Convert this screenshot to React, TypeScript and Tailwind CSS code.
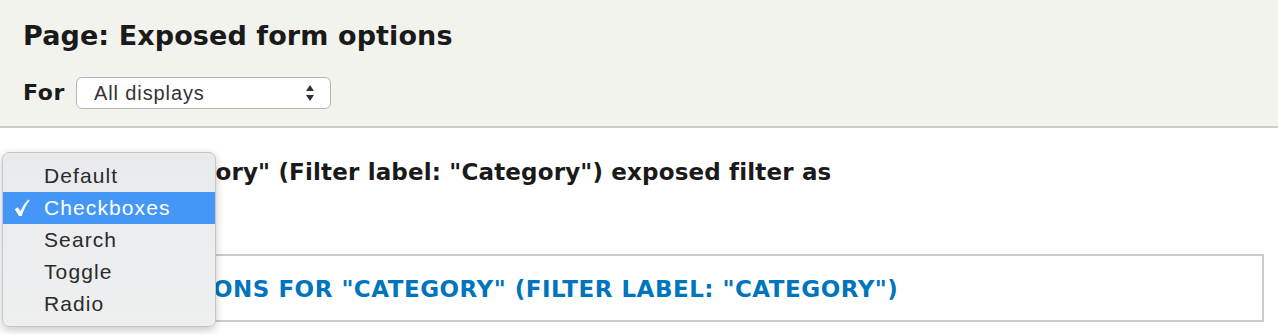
import React from "react";

const bold = { fontFamily: '"DejaVu Sans", Verdana, sans-serif' };

function UpDown() {
  return (
    <svg width="10" height="18" viewBox="0 0 10 18" className="block">
      <path d="M5 1 L9 7 L1 7 Z" fill="#333" />
      <path d="M1 11 L9 11 L5 17 Z" fill="#333" />
    </svg>
  );
}

function Check() {
  return (
    <svg width="16" height="18" viewBox="0 0 16 18" className="block">
      <path
        d="M0.8 10.2 L3.8 8.2 L6.4 12.2 C8.4 7.6 11 3.6 14.6 0.4 L15.6 1.4 C12.2 5.4 9.6 10.6 7.8 17 L5 17 Z"
        fill="#ffffff"
      />
    </svg>
  );
}

const options = ["Default", "Checkboxes", "Search", "Toggle", "Radio"];

export default function App() {
  return (
    <div className="relative w-[1278px] h-[334px] overflow-hidden bg-white text-[#1a1a1a]">
      <header className="h-[128px] bg-[#f3f3ee] border-b-2 border-[#cccccc] pl-[23px] pt-[20px]">
        <h1 style={bold} className="text-[27px] leading-[32px] font-bold tracking-[0.1px]">
          Page: Exposed form options
        </h1>
        <div className="mt-[25px] flex items-center gap-[11px]">
          <span style={bold} className="text-[22px] leading-[32px] font-bold tracking-[0.6px]">
            For
          </span>
          <div className="w-[255px] h-[32px] rounded-[6px] border border-[#b5b5b5] bg-white flex items-center justify-between pl-[17px] pr-[15px]">
            <span className="font-['Liberation_Sans',Arial,sans-serif] text-[20px] text-[#333] tracking-[0.9px]">
              All displays
            </span>
            <UpDown />
          </div>
        </div>
      </header>

      <main className="pl-[23px] pr-[14px] pt-[30px]">
        <p style={bold} className="text-[23px] leading-[28px] font-bold tracking-[0.16px] whitespace-nowrap">
          Display "Category" (Filter label: "Category") exposed filter as
        </p>
        <div className="mt-[6px] w-[180px] h-[32px] rounded-[6px] border border-[#b5b5b5] bg-white" />
        <div className="mt-[30px] h-[68px] border-2 border-[#cccccc] bg-white pl-[39px] pt-[19px]">
          <span
            style={bold}
            className="text-[23px] leading-[28px] font-bold tracking-[0.5px] text-[#0074bd] whitespace-nowrap"
          >
            MORE OPTIONS FOR "CATEGORY" (FILTER LABEL: "CATEGORY")
          </span>
        </div>
      </main>

      <div className="absolute left-[2px] top-[152px] w-[214px] h-[175px] rounded-[7px] border border-[#c4c6c8] bg-gradient-to-b from-[#e8ebee] to-[#eeefef] shadow-[0_3px_10px_rgba(0,0,0,0.22)] pt-[7px] overflow-hidden">
        {options.map((o) => {
          const active = o === "Checkboxes";
          return (
            <div
              key={o}
              className={
                active
                  ? "relative h-[32px] flex items-center pl-[41px] bg-[#4597f7] text-white"
                  : "relative h-[32px] flex items-center pl-[41px] text-[#2a2a2a]"
              }
            >
              {active && (
                <span className="absolute left-[11px] top-[7px]">
                  <Check />
                </span>
              )}
              <span className="font-['Liberation_Sans',Arial,sans-serif] text-[21px] leading-[32px] tracking-[1.1px]">
                {o}
              </span>
            </div>
          );
        })}
      </div>
    </div>
  );
}
